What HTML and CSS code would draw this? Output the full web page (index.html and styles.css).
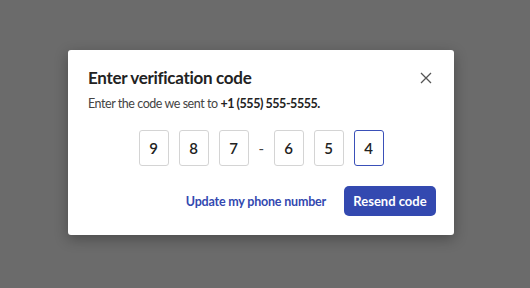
FILE: index.html
```html
<!DOCTYPE html>
<html lang="en">
<head>
    <meta charset="UTF-8">
    <title>Verification code</title>
    <link rel="stylesheet" href="styles.css">
</head>
<body>
    <div class="modal">
        <div class="modal-header">
            <h2 class="modal-title">Enter verification code</h2>
            <button class="close-btn" aria-label="Close">
                <svg width="12" height="12" viewBox="0 0 12 12"><path d="M1 1 L11 11 M11 1 L1 11" stroke="#555" stroke-width="1.3" fill="none"/></svg>
            </button>
        </div>
        <p class="modal-text">Enter the code we sent to <b>+1 (555) 555-5555.</b></p>

        <!-- casillas del codigo -->
        <div class="code-row">
            <div class="digit">9</div>
            <div class="digit">8</div>
            <div class="digit">7</div>
            <span class="dash">-</span>
            <div class="digit">6</div>
            <div class="digit">5</div>
            <div class="digit active">4</div>
        </div>

        <div class="modal-footer">
            <a href="#" class="link-btn">Update my phone number</a>
            <button class="primary-btn">Resend code</button>
        </div>
    </div>
</body>
</html>
```
FILE: styles.css
```css
body {
    margin: 0;
    background-color: #6b6b6b;
    font-family: Lato, Arial, sans-serif;
    min-height: 288px;
    padding: 50px 0 0 68px;
    box-sizing: border-box;
}

.modal {
    width: 386px;
    height: 185px;
    box-sizing: border-box;
    background-color: #fff;
    border-radius: 3px;
    box-shadow: 0 4px 14px rgba(0, 0, 0, 0.3);
    padding: 16px 18px 19px 20px;
}

.modal-header {
    display: flex;
    justify-content: space-between;
    align-items: center;
}

.modal-title {
    margin: 0;
    font-size: 17px;
    line-height: 24px;
    font-weight: bold;
    letter-spacing: -0.3px;
    color: #222;
}

.close-btn {
    background: none;
    border: none;
    padding: 0;
    margin-right: 4px;
    display: flex;
    cursor: pointer;
}

.modal-text {
    margin: 5px 0 0;
    font-size: 12.5px;
    line-height: 18px;
    letter-spacing: -0.45px;
    color: #444;
}

.modal-text b {
    color: #222;
}

.code-row {
    display: flex;
    justify-content: center;
    align-items: center;
    gap: 10px;
    margin-top: 17px;
    margin-left: -2px;
}

.digit {
    width: 30px;
    height: 36px;
    box-sizing: border-box;
    border: 1px solid #d4d4d4;
    border-radius: 3px;
    display: flex;
    align-items: center;
    justify-content: center;
    font-size: 15px;
    font-weight: 600;
    color: #222;
}

.digit.active {
    border-color: #3a50b8;
}

.dash {
    width: 5px;
    font-size: 15px;
    color: #444;
    text-align: center;
}

.modal-footer {
    display: flex;
    justify-content: flex-end;
    align-items: center;
    gap: 18px;
    margin-top: 20px;
}

.link-btn {
    color: #3349b0;
    font-size: 12.5px;
    font-weight: bold;
    letter-spacing: -0.2px;
    text-decoration: none;
}

.primary-btn {
    width: 92px;
    height: 30px;
    background-color: #3349b0;
    color: #fff;
    border: none;
    border-radius: 5px;
    font-family: Lato, Arial, sans-serif;
    font-size: 13px;
    font-weight: bold;
    cursor: pointer;
}
```
